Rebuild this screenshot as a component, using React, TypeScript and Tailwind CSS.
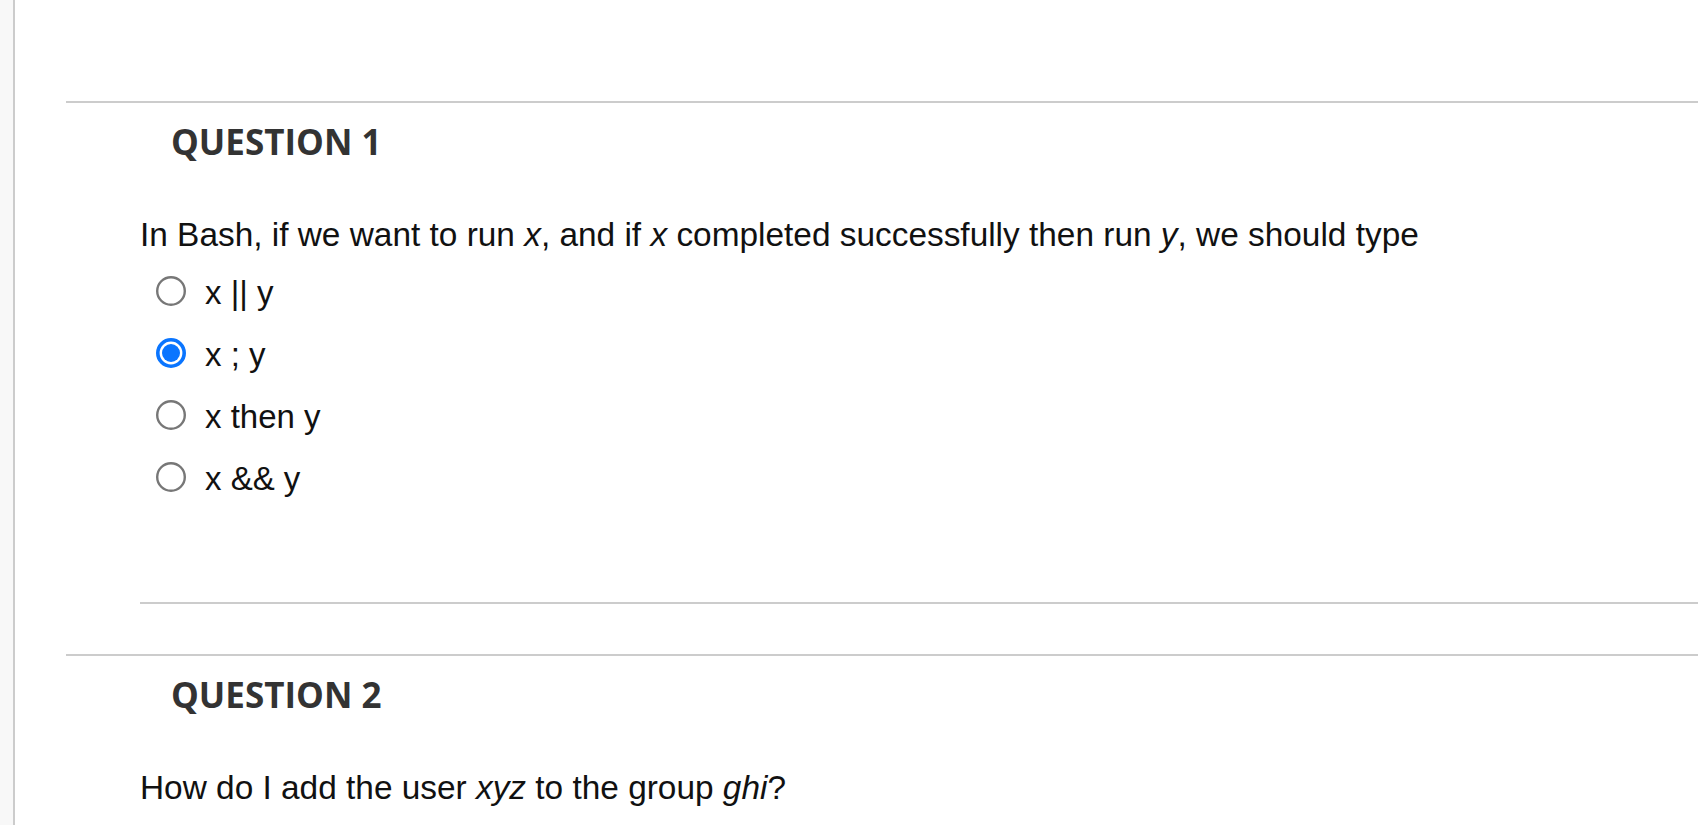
import React from 'react';

interface Option {
  label: string;
  checked?: boolean;
}

const options: Option[] = [
  { label: 'x || y' },
  { label: 'x ; y', checked: true },
  { label: 'x then y' },
  { label: 'x && y' },
];

const Radio: React.FC<{ checked?: boolean }> = ({ checked }) => (
  <svg width="30" height="30" viewBox="0 0 30 30" className="shrink-0">
    {checked ? (
      <>
        <circle cx="15" cy="15" r="13.2" fill="white" stroke="#0a75ff" strokeWidth="3.6" />
        <circle cx="15" cy="15" r="9" fill="#0a75ff" />
      </>
    ) : (
      <circle cx="15" cy="15" r="13.8" fill="white" stroke="#777777" strokeWidth="2.4" />
    )}
  </svg>
);

const Heading: React.FC<{ children: React.ReactNode }> = ({ children }) => (
  <h3 className="mt-[14px] pl-[105px] text-[35px] leading-[49px] font-bold text-[#333333] font-['Open_Sans',sans-serif]">
    {children}
  </h3>
);

export default function App() {
  return (
    <div className="flex min-h-screen bg-white font-['Liberation_Sans',Arial,sans-serif] text-[#111111]">
      <div className="w-[15px] shrink-0 bg-[#f8f8f8] border-r-2 border-[#cccccc]" />
      <main className="flex-1 pl-[51px] pt-[101px]">
        <section className="border-t-2 border-[#cccccc]">
          <Heading>QUESTION 1</Heading>
          <div className="pl-[74px] mt-[50px]">
            <p className="text-[33.4px] leading-[37px]">
              In Bash, if we want to run <i>x</i>, and if <i>x</i> completed successfully then run <i>y</i>, we should type
            </p>
            <div className="mt-[7px] flex flex-col">
              {options.map(o => (
                <label key={o.label} className="flex items-center h-[62px] pl-[16px]">
                  <Radio checked={o.checked} />
                  <span className="ml-[19px] text-[33px] leading-[37px] pt-[2px]">{o.label}</span>
                </label>
              ))}
            </div>
            <div className="mt-[94px] border-t-2 border-[#cccccc]" />
          </div>
        </section>
        <section className="mt-[50px] border-t-2 border-[#cccccc]">
          <Heading>QUESTION 2</Heading>
          <div className="pl-[74px] mt-[50px]">
            <p className="text-[33.4px] leading-[37px]">
              How do I add the user <i>xyz</i> to the group <i>ghi</i>?
            </p>
          </div>
        </section>
      </main>
    </div>
  );
}
